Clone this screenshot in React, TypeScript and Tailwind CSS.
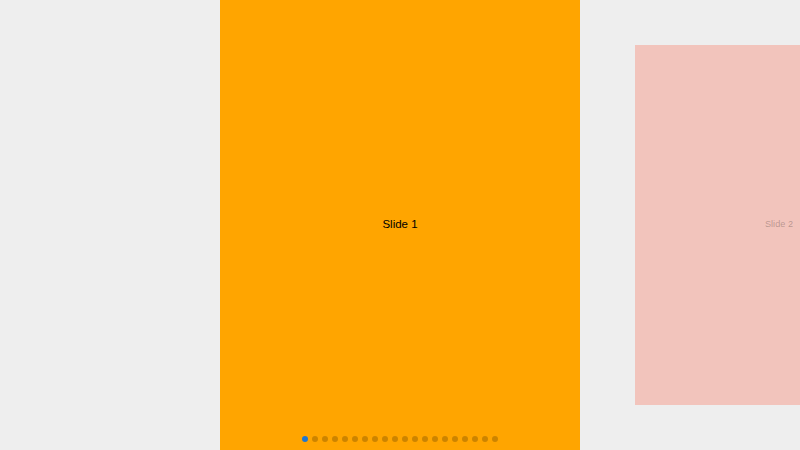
import React, { useState } from 'react'

const slides = [
  { id: 1, label: 'Slide 1', color: 'bg-[#ffa500]' },
  { id: 2, label: 'Slide 2', color: 'bg-[#f2c4bc]' },
]

const App = () => {
  const [current, setCurrent] = useState(0)
  const dots = Array.from({ length: 20 })

  return (
    <div className="w-full h-[450px] bg-[#eeeeee] overflow-hidden font-['Liberation_Sans',Arial,sans-serif]">
      <div className="flex h-full gap-[19px] pl-[220px]">
        {/* active slide */}
        <div className={`relative shrink-0 w-[360px] h-full ${slides[0].color} flex items-center justify-center`}>
          <span className="text-[11.5px] text-black">{slides[0].label}</span>
          <div className="absolute bottom-[8px] left-0 w-full flex justify-center gap-[4px]">
            {dots.map((_, idx) => (
              <button
                key={idx}
                onClick={() => setCurrent(idx)}
                className={`w-[6px] h-[6px] rounded-full ${idx === current ? 'bg-[#1f76d0]' : 'bg-black/20'}`}
                aria-label={`Go to slide ${idx + 1}`}
              />
            ))}
          </div>
        </div>
        {/* next slide, scaled down */}
        <div className={`shrink-0 w-[360px] h-full ${slides[1].color} scale-[0.8] flex items-center justify-center`}>
          <span className="text-[11.5px] text-black/25">{slides[1].label}</span>
        </div>
      </div>
    </div>
  )
}

export default App
